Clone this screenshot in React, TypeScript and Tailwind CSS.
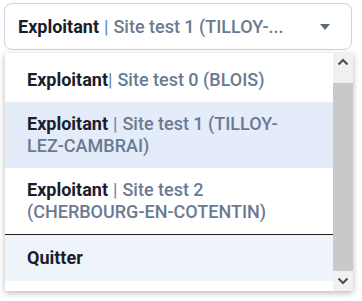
import React from "react";

interface SiteOption {
  id: number;
  role: string;
  label: string;
  tight?: boolean;
}

const options: SiteOption[] = [
  { id: 0, role: "Exploitant", label: "Site test 0 (BLOIS)", tight: true },
  { id: 1, role: "Exploitant", label: "Site test 1 (TILLOY-LEZ-CAMBRAI)" },
  { id: 2, role: "Exploitant", label: "Site test 2 (CHERBOURG-EN-COTENTIN)" },
];

const Chevron: React.FC<{ up?: boolean }> = ({ up }) => (
  <svg width="12" height="8" viewBox="0 0 12 8" className={up ? "" : "rotate-180"}>
    <path d="M1.5 6.5 L6 2 L10.5 6.5" fill="none" stroke="#505050" strokeWidth="2.2" />
  </svg>
);

export default function App() {
  const selectedId = 1;

  return (
    <div
      className="w-[362px] h-[301px] bg-white pt-[3px] pl-[4px]"
      style={{ fontFamily: "Roboto, 'Liberation Sans', sans-serif" }}
    >
      {/* select trigger */}
      <div className="w-[348px] h-[47px] border border-[#c9d3e1] rounded-lg flex items-center pl-[13px] pr-[21px]">
        <div className="flex-1 text-[18px] leading-[22px] whitespace-nowrap">
          <span className="font-bold text-[#1b1d2b]">Exploitant</span>
          <span className="text-[#5f82b5] mx-[5px]">|</span>
          <span className="text-[#6c7a91] font-medium">Site test 1 (TILLOY-...</span>
        </div>
        <svg width="10" height="6" viewBox="0 0 10 6">
          <path d="M0 0 H10 L5 6 Z" fill="#5d6b80" />
        </svg>
      </div>

      {/* dropdown */}
      <div className="mt-[3px] ml-[1px] w-[348px] h-[238px] bg-white shadow-[0_2px_6px_rgba(0,0,0,0.28)] flex">
        <div className="flex-1 flex flex-col pt-[5px]">
          {options.map((o) => (
            <div
              key={o.id}
              className={`pl-[22px] pr-[30px] py-[11px] text-[18px] leading-[22px] ${
                o.id === selectedId ? "bg-[#e3ecf8]" : "bg-white"
              }`}
            >
              <span className="font-bold text-[#1b1d2b]">{o.role}</span>
              <span className={`text-[#5f82b5] ${o.tight ? "mr-[5px]" : "mx-[5px]"}`}>|</span>
              <span className="text-[#6c7a91] font-medium">{o.label}</span>
            </div>
          ))}
          <div className="border-t border-[#1e1e1e] bg-[#eff3fa] px-[22px] py-[12px] text-[18px] leading-[22px] font-bold text-[#1b1d2b]">
            Quitter
          </div>
        </div>
        {/* scrollbar */}
        <div className="w-[20px] flex flex-col bg-[#f1f1f1]">
          <div className="h-[17px] flex items-center justify-center">
            <Chevron up />
          </div>
          <div className="flex-1 pt-[13px] flex flex-col">
            <div className="flex-1 bg-[#c9c9c9]" />
          </div>
          <div className="h-[20px] flex items-center justify-center">
            <Chevron />
          </div>
        </div>
      </div>
    </div>
  );
}
